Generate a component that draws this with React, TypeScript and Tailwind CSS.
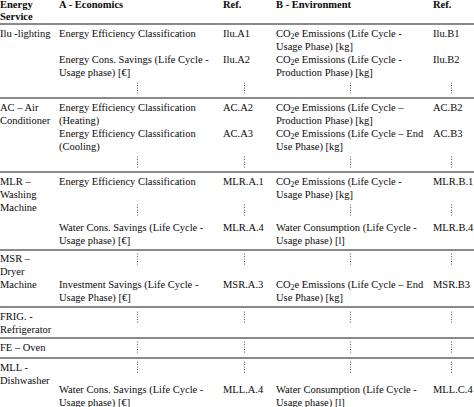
import React from 'react';

type Cell = React.ReactNode;

type Row =
  | { kind: 'text'; a: Cell; aRef: Cell; b: Cell; bRef: Cell }
  | { kind: 'dots'; h: string; pt: string };

type Group = {
  service: Cell;
  servicePt: string;
  pt: string;
  pb: string;
  rows: Row[];
};

const CO2 = () => (
  <>
    CO<sub>2</sub>e
  </>
);

function Dots() {
  return (
    <svg width="3" height="12" viewBox="0 0 3 12" className="block">
      {[1, 3.5, 6, 8.5, 11].map((cy) => (
        <circle key={cy} cx="1.5" cy={cy} r="0.6" fill="#444" />
      ))}
    </svg>
  );
}

const groups: Group[] = [
  {
    service: 'Ilu -lighting',
    servicePt: 'pt-[2px]',
    pt: 'pt-[2px]',
    pb: 'pb-0',
    rows: [
      {
        kind: 'text',
        a: 'Energy Efficiency Classification',
        aRef: 'Ilu.A1',
        b: (
          <>
            <CO2 /> Emissions (Life Cycle -<br />
            Usage Phase) [kg]
          </>
        ),
        bRef: 'Ilu.B1',
      },
      {
        kind: 'text',
        a: (
          <>
            Energy Cons. Savings (Life Cycle -<br />
            Usage phase) [€]
          </>
        ),
        aRef: 'Ilu.A2',
        b: (
          <>
            <CO2 /> Emissions (Life Cycle -<br />
            Production Phase) [kg]
          </>
        ),
        bRef: 'Ilu.B2',
      },
      { kind: 'dots', h: 'h-[18px]', pt: 'pt-[3px]' },
    ],
  },
  {
    service: (
      <>
        AC – Air
        <br />
        Conditioner
      </>
    ),
    servicePt: 'pt-[2px]',
    pt: 'pt-[2px]',
    pb: 'pb-0',
    rows: [
      {
        kind: 'text',
        a: (
          <>
            Energy Efficiency Classification
            <br />
            (Heating)
          </>
        ),
        aRef: 'AC.A2',
        b: (
          <>
            <CO2 /> Emissions (Life Cycle –<br />
            Production Phase) [kg]
          </>
        ),
        bRef: 'AC.B2',
      },
      {
        kind: 'text',
        a: (
          <>
            Energy Efficiency Classification
            <br />
            (Cooling)
          </>
        ),
        aRef: 'AC.A3',
        b: (
          <>
            <CO2 /> Emissions (Life Cycle – End
            <br />
            Use Phase) [kg]
          </>
        ),
        bRef: 'AC.B3',
      },
      { kind: 'dots', h: 'h-[18px]', pt: 'pt-[3px]' },
    ],
  },
  {
    service: (
      <>
        MLR –<br />
        Washing
        <br />
        Machine
      </>
    ),
    servicePt: 'pt-[2px]',
    pt: 'pt-[2px]',
    pb: 'pb-[2px]',
    rows: [
      {
        kind: 'text',
        a: 'Energy Efficiency Classification',
        aRef: 'MLR.A.1',
        b: (
          <>
            <CO2 /> Emissions (Life Cycle -<br />
            Usage Phase) [kg]
          </>
        ),
        bRef: 'MLR.B.1',
      },
      { kind: 'dots', h: 'h-[20px]', pt: 'pt-[3px]' },
      {
        kind: 'text',
        a: (
          <>
            Water Cons. Savings (Life Cycle -<br />
            Usage phase) [€]
          </>
        ),
        aRef: 'MLR.A.4',
        b: (
          <>
            Water Consumption (Life Cycle -<br />
            Usage phase) [l]
          </>
        ),
        bRef: 'MLR.B.4',
      },
    ],
  },
  {
    service: (
      <>
        MSR –<br />
        Dryer
        <br />
        Machine
      </>
    ),
    servicePt: 'pt-px',
    pt: 'pt-0',
    pb: 'pb-[2px]',
    rows: [
      { kind: 'dots', h: 'h-[27px]', pt: 'pt-[2px]' },
      {
        kind: 'text',
        a: (
          <>
            Investment Savings (Life Cycle -<br />
            Usage Phase) [€]
          </>
        ),
        aRef: 'MSR.A.3',
        b: (
          <>
            <CO2 /> Emissions (Life Cycle – End
            <br />
            Use Phase) [kg]
          </>
        ),
        bRef: 'MSR.B3',
      },
    ],
  },
  {
    service: (
      <>
        FRIG. -<br />
        Refrigerator
      </>
    ),
    servicePt: 'pt-[1.5px]',
    pt: 'pt-0',
    pb: 'pb-0',
    rows: [{ kind: 'dots', h: 'h-[29px]', pt: 'pt-[3px]' }],
  },
  {
    service: 'FE – Oven',
    servicePt: 'pt-[1.5px]',
    pt: 'pt-0',
    pb: 'pb-0',
    rows: [{ kind: 'dots', h: 'h-[18px]', pt: 'pt-[2px]' }],
  },
  {
    service: (
      <>
        MLL -<br />
        Dishwasher
      </>
    ),
    servicePt: 'pt-[1.5px]',
    pt: 'pt-0',
    pb: 'pb-0',
    rows: [
      { kind: 'dots', h: 'h-[24px]', pt: 'pt-[2px]' },
      {
        kind: 'text',
        a: (
          <>
            Water Cons. Savings (Life Cycle -<br />
            Usage phase) [€]
          </>
        ),
        aRef: 'MLL.A.4',
        b: (
          <>
            Water Consumption (Life Cycle -<br />
            Usage phase) [l]
          </>
        ),
        bRef: 'MLL.C.4',
      },
    ],
  },
];

const cols = 'grid grid-cols-[164px_53px_157px_1fr]';

function SubRow({ row }: { row: Row }) {
  if (row.kind === 'dots') {
    return (
      <div className={`${cols} ${row.h} ${row.pt}`}>
        <div className="pl-[76.5px]">
          <Dots />
        </div>
        <div className="pl-[19.5px]">
          <Dots />
        </div>
        <div className="pl-[72.5px]">
          <Dots />
        </div>
        <div className="pl-[16.5px]">
          <Dots />
        </div>
      </div>
    );
  }
  return (
    <div className={`${cols} whitespace-nowrap`}>
      <div>{row.a}</div>
      <div>{row.aRef}</div>
      <div>{row.b}</div>
      <div>{row.bRef}</div>
    </div>
  );
}

export default function App() {
  return (
    <div
      className="w-[474px] h-[407px] overflow-hidden bg-white text-[#0a0a0a] text-[10.5px] leading-[13px]"
      style={{ fontFamily: '"Liberation Serif", "Times New Roman", serif' }}
    >
      <div className="flex h-[25px] border-b-2 border-[#8a8a8a] font-bold leading-[12px] whitespace-nowrap">
        <div className="w-[59px] -mt-px">
          Energy
          <br />
          Service
        </div>
        <div className={`${cols} flex-1 -mt-px`}>
          <div>A - Economics</div>
          <div>Ref.</div>
          <div>B - Environment</div>
          <div>Ref.</div>
        </div>
      </div>

      {groups.map((g, i) => (
        <div key={i} className="flex border-b-2 border-[#8a8a8a]">
          <div className={`w-[59px] shrink-0 whitespace-nowrap ${g.servicePt}`}>{g.service}</div>
          <div className={`flex-1 flex flex-col ${g.pt} ${g.pb}`}>
            {g.rows.map((r, j) => (
              <SubRow key={j} row={r} />
            ))}
          </div>
        </div>
      ))}
    </div>
  );
}
